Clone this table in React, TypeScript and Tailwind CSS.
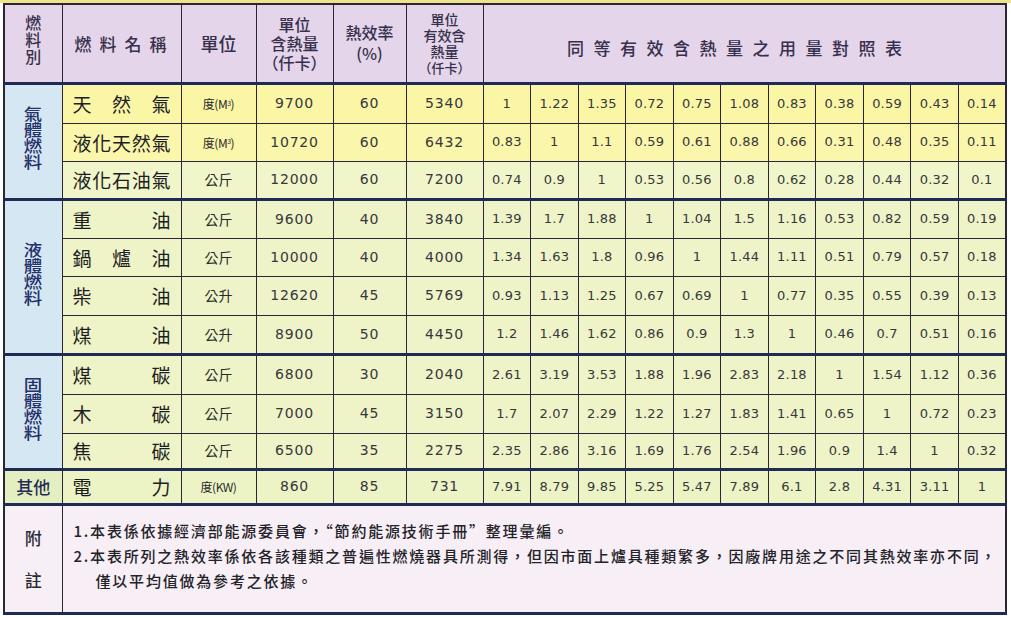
import React from "react";

const CJK = "font-['Noto_Sans_CJK_TC','Noto_Sans_CJK_SC',sans-serif]";
const NUM = "font-['DejaVu_Sans',sans-serif]";

type Row = {
  name: string[];
  unit: React.ReactNode;
  heat: string;
  eff: string;
  eheat: string;
  vals: string[];
  bg: string;
  h: string;
};

type Group = { label: string; labelBg: string; rows: Row[] };

const M3 = (
  <span className="text-[12px] tracking-[-0.5px]">
    度(M<sup className="text-[7px]">3</sup>)
  </span>
);

const groups: Group[] = [
  {
    label: "氣體燃料",
    labelBg: "bg-[#d5e7f2]",
    rows: [
      { name: ["天", "然", "氣"], unit: M3, heat: "9700", eff: "60", eheat: "5340", vals: ["1", "1.22", "1.35", "0.72", "0.75", "1.08", "0.83", "0.38", "0.59", "0.43", "0.14"], bg: "bg-[#faf6a6]", h: "h-[40px]" },
      { name: ["液", "化", "天", "然", "氣"], unit: M3, heat: "10720", eff: "60", eheat: "6432", vals: ["0.83", "1", "1.1", "0.59", "0.61", "0.88", "0.66", "0.31", "0.48", "0.35", "0.11"], bg: "bg-[#faf6ab]", h: "h-[38px]" },
      { name: ["液", "化", "石", "油", "氣"], unit: "公斤", heat: "12000", eff: "60", eheat: "7200", vals: ["0.74", "0.9", "1", "0.53", "0.56", "0.8", "0.62", "0.28", "0.44", "0.32", "0.1"], bg: "bg-[#f0f6c9]", h: "h-[38px]" },
    ],
  },
  {
    label: "液體燃料",
    labelBg: "bg-[#d5e7f2]",
    rows: [
      { name: ["重", "油"], unit: "公斤", heat: "9600", eff: "40", eheat: "3840", vals: ["1.39", "1.7", "1.88", "1", "1.04", "1.5", "1.16", "0.53", "0.82", "0.59", "0.19"], bg: "bg-[#eef4c8]", h: "h-[39px]" },
      { name: ["鍋", "爐", "油"], unit: "公斤", heat: "10000", eff: "40", eheat: "4000", vals: ["1.34", "1.63", "1.8", "0.96", "1", "1.44", "1.11", "0.51", "0.79", "0.57", "0.18"], bg: "bg-[#eef4c8]", h: "h-[38px]" },
      { name: ["柴", "油"], unit: "公升", heat: "12620", eff: "45", eheat: "5769", vals: ["0.93", "1.13", "1.25", "0.67", "0.69", "1", "0.77", "0.35", "0.55", "0.39", "0.13"], bg: "bg-[#eef4c8]", h: "h-[39px]" },
      { name: ["煤", "油"], unit: "公升", heat: "8900", eff: "50", eheat: "4450", vals: ["1.2", "1.46", "1.62", "0.86", "0.9", "1.3", "1", "0.46", "0.7", "0.51", "0.16"], bg: "bg-[#eef4c8]", h: "h-[39px]" },
    ],
  },
  {
    label: "固體燃料",
    labelBg: "bg-[#d5e7f2]",
    rows: [
      { name: ["煤", "碳"], unit: "公斤", heat: "6800", eff: "30", eheat: "2040", vals: ["2.61", "3.19", "3.53", "1.88", "1.96", "2.83", "2.18", "1", "1.54", "1.12", "0.36"], bg: "bg-[#eef4c8]", h: "h-[40px]" },
      { name: ["木", "碳"], unit: "公斤", heat: "7000", eff: "45", eheat: "3150", vals: ["1.7", "2.07", "2.29", "1.22", "1.27", "1.83", "1.41", "0.65", "1", "0.72", "0.23"], bg: "bg-[#eef4c8]", h: "h-[39px]" },
      { name: ["焦", "碳"], unit: "公斤", heat: "6500", eff: "35", eheat: "2275", vals: ["2.35", "2.86", "3.16", "1.69", "1.76", "2.54", "1.96", "0.9", "1.4", "1", "0.32"], bg: "bg-[#eef4c8]", h: "h-[36px]" },
    ],
  },
];

const other: Row = {
  name: ["電", "力"],
  unit: <span className="text-[12px] tracking-[-0.5px]">度(KW)</span>,
  heat: "860",
  eff: "85",
  eheat: "731",
  vals: ["7.91", "8.79", "9.85", "5.25", "5.47", "7.89", "6.1", "2.8", "4.31", "3.11", "1"],
  bg: "bg-[#ecf4c6]",
  h: "h-[35px]",
};

const cell = "border border-[#2b2637] p-0 text-center align-middle";

function RowCells({ r }: { r: Row }) {
  return (
    <>
      <td className={`${cell} ${r.bg}`}>
        <div className={`${CJK} flex justify-between px-[10px] text-[19px] leading-none text-[#1d1d22]`}>
          {r.name.map((c, i) => (
            <span key={i}>{c}</span>
          ))}
        </div>
      </td>
      <td className={`${cell} ${r.bg} ${CJK} text-[14px] text-[#2a2a2a]`}>{r.unit}</td>
      <td className={`${cell} ${r.bg} ${NUM} text-[14px] tracking-[0.8px] text-[#37373c]`}>{r.heat}</td>
      <td className={`${cell} ${r.bg} ${NUM} text-[14px] tracking-[0.8px] text-[#37373c]`}>{r.eff}</td>
      <td className={`${cell} ${r.bg} ${NUM} text-[14px] tracking-[0.8px] text-[#37373c]`}>{r.eheat}</td>
      {r.vals.map((v, i) => (
        <td key={i} className={`${cell} ${r.bg} ${NUM} text-[13px] tracking-[0.2px] text-[#37373c]`}>
          {v}
        </td>
      ))}
    </>
  );
}

function Vertical({ text, cls }: { text: string; cls: string }) {
  return (
    <div className={`${CJK} inline-block [writing-mode:vertical-rl] leading-none ${cls}`}>{text}</div>
  );
}

export default function App() {
  const dataCols = Array.from({ length: 11 });
  return (
    <div className="w-[1011px] h-[618px] bg-white border-t-[3px] border-[#eee48c] pl-[3px] overflow-hidden">
      <table className="table-fixed w-[1004px] border-collapse border-2 border-[#2b2637]">
        <colgroup>
          <col className="w-[58px]" />
          <col className="w-[119px]" />
          <col className="w-[75px]" />
          <col className="w-[77px]" />
          <col className="w-[73px]" />
          <col className="w-[77px]" />
          {dataCols.map((_, i) => (
            <col key={i} />
          ))}
        </colgroup>
        <thead>
          <tr className="h-[79px] bg-[#e5d5ea] text-[#37304c]">
            <td className={cell}>
              <Vertical text="燃料別" cls="text-[16px] tracking-[1px] font-medium" />
            </td>
            <td className={`${cell} ${CJK} text-[17px] font-medium tracking-[8px] pl-[6px]`}>燃料名稱</td>
            <td className={`${cell} ${CJK} text-[18px] font-medium`}>單位</td>
            <td className={`${cell} ${CJK} text-[16px] leading-[19px] font-medium`}>
              單位
              <br />
              含熱量
              <br />
              （仟卡）
            </td>
            <td className={`${cell} ${CJK} text-[16px] leading-[21px] font-medium`}>
              熱效率
              <br />
              (%)
            </td>
            <td className={`${cell} ${CJK} text-[14px] leading-[16px] font-medium`}>
              單位
              <br />
              有效含
              <br />
              熱量
              <br />
              <span className="text-[13px]">（仟卡）</span>
            </td>
            <td colSpan={11} className={`${cell} ${CJK} text-[17px] font-medium tracking-[9.5px] pt-[8px] pr-[10px]`}>
              同等有效含熱量之用量對照表
            </td>
          </tr>
        </thead>
        <tbody>
          {groups.map((g, gi) =>
            g.rows.map((r, ri) => (
              <tr key={`${gi}-${ri}`} className={`${r.h} ${ri === 0 ? "border-t-[3px] border-[#1f2a55]" : ""}`}>
                {ri === 0 && (
                  <td rowSpan={g.rows.length} className={`${cell} ${g.labelBg}`}>
                    <Vertical text={g.label} cls="text-[16px] tracking-[0px] font-medium text-[#23306a] scale-x-115" />
                  </td>
                )}
                <RowCells r={r} />
              </tr>
            ))
          )}
          <tr className={`${other.h} border-t-[3px] border-[#1f2a55]`}>
            <td className={`${cell} bg-[#e3efc0] ${CJK} text-[17px] font-medium text-[#1f2a55]`}>其他</td>
            <RowCells r={other} />
          </tr>
          <tr className="h-[109px] border-t-[3px] border-[#1f2a55] border-b-[3px]">
            <td className={`${cell} bg-[#f7eef6]`}>
              <div className={`${CJK} flex flex-col items-center gap-[24px] text-[17px] leading-[18px] font-medium text-[#2a2a33]`}>
                <span>附</span>
                <span>註</span>
              </div>
            </td>
            <td colSpan={16} className={`${cell} bg-[#f7eef6] align-top text-left pt-[12px] pl-[11px]`}>
              <div className={`${CJK} text-[15px] leading-[25px] tracking-[1.8px] font-medium text-[#222228]`}>
                <div>1.本表係依據經濟部能源委員會，“節約能源技術手冊”整理彙編。</div>
                <div className="whitespace-nowrap">2.本表所列之熱效率係依各該種類之普遍性燃燒器具所測得，但因市面上爐具種類繁多，因廠牌用途之不同其熱效率亦不同，</div>
                <div className="pl-[22px]">僅以平均值做為參考之依據。</div>
              </div>
            </td>
          </tr>
        </tbody>
      </table>
    </div>
  );
}
